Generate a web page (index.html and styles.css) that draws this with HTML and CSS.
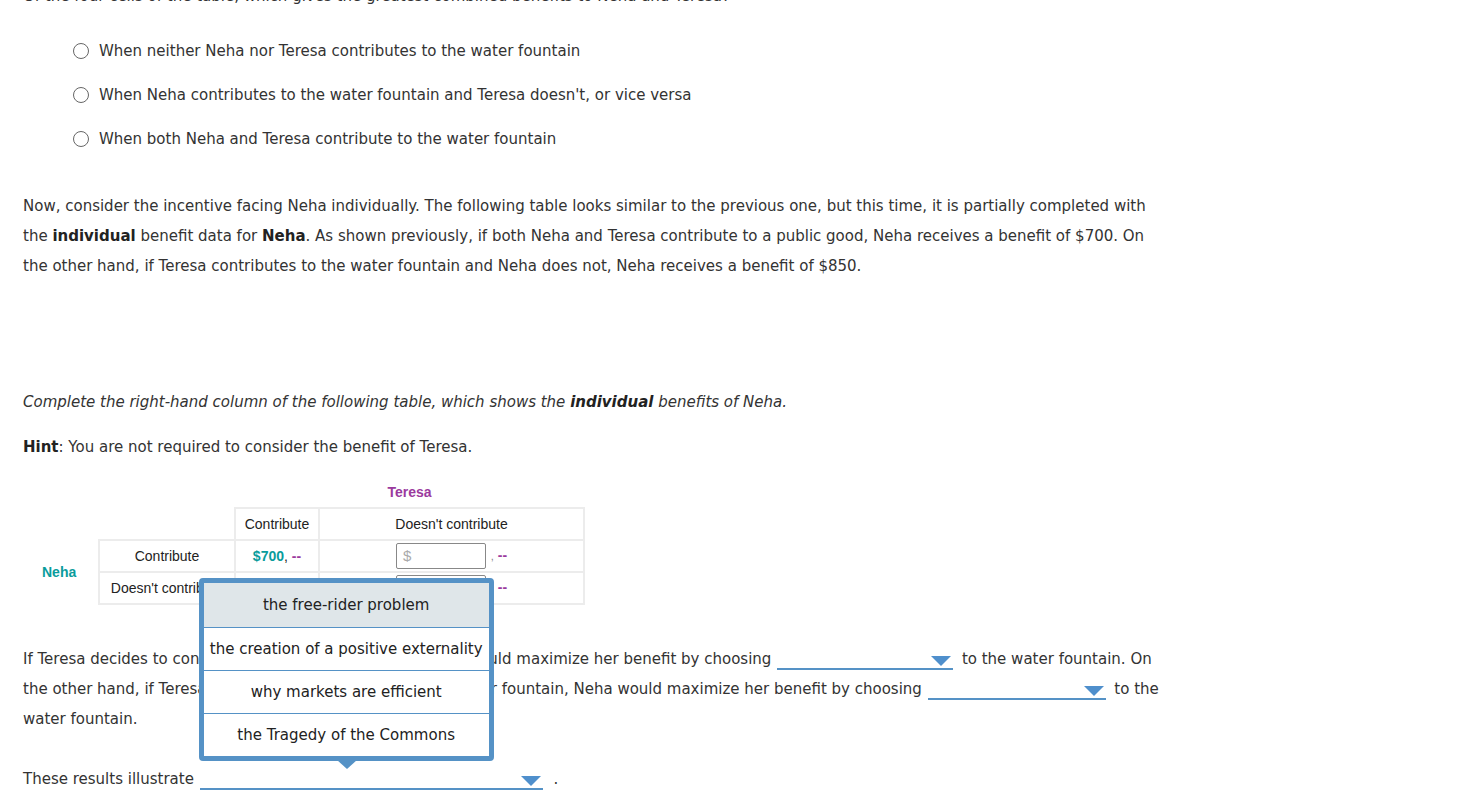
FILE: index.html
```html
<!DOCTYPE html>
<html>
<head>
<meta charset="utf-8">
<link rel="stylesheet" href="styles.css">
</head>
<body>
<div class="page">
  <p class="cut">Of the four cells of the table, which gives the greatest combined benefits to Neha and Teresa?</p>

  <ul class="options">
    <li><span class="radio"></span>When neither Neha nor Teresa contributes to the water fountain</li>
    <li><span class="radio"></span>When Neha contributes to the water fountain and Teresa doesn't, or vice versa</li>
    <li><span class="radio"></span>When both Neha and Teresa contribute to the water fountain</li>
  </ul>

  <p class="para">Now, consider the incentive facing Neha individually. The following table looks similar to the previous one, but this time, it is partially completed with the <b>individual</b> benefit data for <b>Neha</b>. As shown previously, if both Neha and Teresa contribute to a public good, Neha receives a benefit of $700. On the other hand, if Teresa contributes to the water fountain and Neha does not, Neha receives a benefit of $850.</p>

  <p class="instr"><i>Complete the right-hand column of the following table, which shows the <b>individual</b> benefits of Neha.</i></p>

  <p class="hint"><b>Hint</b>: You are not required to consider the benefit of Teresa.</p>

  <table class="game">
    <tr class="trow">
      <td class="blank"></td><td class="blank corner"></td>
      <td colspan="2" class="teresa">Teresa</td>
    </tr>
    <tr class="hrow">
      <td class="blank"></td><td class="blank corner"></td>
      <td class="cell c2">Contribute</td>
      <td class="cell wide">Doesn't contribute</td>
    </tr>
    <tr class="row">
      <td class="blank neha" rowspan="2">Neha</td>
      <td class="cell rhead">Contribute</td>
      <td class="cell"><span class="teal">$700</span>, <span class="purple">--</span></td>
      <td class="cell"><span class="input">$</span> <span class="comma">,</span> <span class="purple">--</span></td>
    </tr>
    <tr class="row">
      <td class="cell rhead">Doesn't contribute</td>
      <td class="cell"><span class="teal">$850</span>, <span class="purple">--</span></td>
      <td class="cell"><span class="input">$</span> <span class="comma">,</span> <span class="purple">--</span></td>
    </tr>
  </table>

  <p class="para q">If Teresa decides to contribute to the water fountain, Neha would maximize her benefit by choosing <span class="select s1"></span> to the water fountain. On the other hand, if Teresa decides not to contribute to the water fountain, Neha would maximize her benefit by choosing <span class="select s2"></span> to the water fountain.</p>

  <p class="para last">These results illustrate <span class="selwrap"><span class="select s3"></span><span class="popup">
      <span class="item hl">the free-rider problem</span>
      <span class="item">the creation of a positive externality</span>
      <span class="item">why markets are efficient</span>
      <span class="item">the Tragedy of the Commons</span>
    </span></span> .</p>
</div>
</body>
</html>
```

FILE: styles.css
```css
html, body {
  margin: 0;
  padding: 0;
  background: #fff;
  overflow: hidden;
}
body {
  font-family: "DejaVu Sans", Verdana, sans-serif;
  font-size: 15px;
  color: #333;
}
.page {
  padding-left: 23px;
  width: 1140px;
}
p { margin: 0; }
.cut {
  line-height: 30px;
  margin-top: -19px;
}
.options {
  list-style: none;
  margin: 18px 0 0 0;
  padding: 0 0 0 50px;
}
.options li {
  height: 44px;
  display: flex;
  align-items: center;
}
.radio {
  width: 14px;
  height: 14px;
  border: 1px solid #666;
  border-radius: 50%;
  margin-right: 10px;
  flex: none;
}
.para {
  line-height: 30px;
}
.options + .para {
  margin-top: 30px;
}
.instr {
  line-height: 30px;
  margin-top: 106px;
}
.hint {
  line-height: 30px;
  margin-top: 15px;
}
b { color: #222; }

.game {
  border-collapse: collapse;
  font-family: "Liberation Sans", Arial, sans-serif;
  font-size: 14px;
  color: #222;
  margin-top: 14px;
}
.game td {
  padding: 0;
  text-align: center;
}
.trow td { height: 31px; }
.teresa {
  color: #9b3a9e;
  font-weight: bold;
}
.blank { width: 75px; }
.corner { width: 135px; }
.cell {
  border: 2px solid #ececec;
  height: 30px;
}
.c2 { width: 82px; }
.wide { width: 263px; }
.rhead { width: 131px; }
.neha {
  color: #0a9c9c;
  font-weight: bold;
  text-align: left !important;
  padding-left: 19px !important;
  width: 56px;
}
.teal { color: #0a9c9c; font-weight: bold; }
.purple { color: #9b3a9e; font-weight: bold; }
.input {
  display: inline-block;
  width: 82px;
  height: 24px;
  border: 1px solid #888;
  border-radius: 2px;
  text-align: left;
  padding-left: 6px;
  line-height: 24px;
  color: #aaa;
  font-size: 15px;
  vertical-align: middle;
}
.comma {
  color: #888;
  font-size: 11px;
  margin-left: 1px;
}

.q { margin-top: 39px; }
.last { margin-top: 30px; }

.select {
  display: inline-block;
  height: 18px;
  border-bottom: 2px solid #5592c6;
  vertical-align: -6px;
  position: relative;
  margin: 0 4px 0 1px;
}
.select::after {
  content: "";
  position: absolute;
  right: 2px;
  top: 6px;
  border-left: 10px solid transparent;
  border-right: 10px solid transparent;
  border-top: 10px solid #4f8fcc;
}
.s1 { width: 176px; }
.s2 { width: 178px; }
.s3 { width: 343px; margin-right: 6px; }

.selwrap {
  position: relative;
  display: inline-block;
}
.popup {
  position: absolute;
  left: 0;
  bottom: 33px;
  width: 285px;
  border: 5px solid #5592c6;
  border-radius: 4px;
  background: #fff;
  display: flex;
  flex-direction: column;
  line-height: normal;
  z-index: 5;
}
.popup::after {
  content: "";
  position: absolute;
  left: 133px;
  bottom: -13px;
  border-left: 10px solid transparent;
  border-right: 10px solid transparent;
  border-top: 9px solid #5592c6;
}
.item {
  height: 42px;
  display: flex;
  align-items: center;
  justify-content: center;
  color: #222;
  font-size: 15px;
  white-space: nowrap;
  border-top: 1px solid #5592c6;
}
.item:first-child { border-top: none; height: 44px; }
.item.hl { background: #dfe6e9; }
```
